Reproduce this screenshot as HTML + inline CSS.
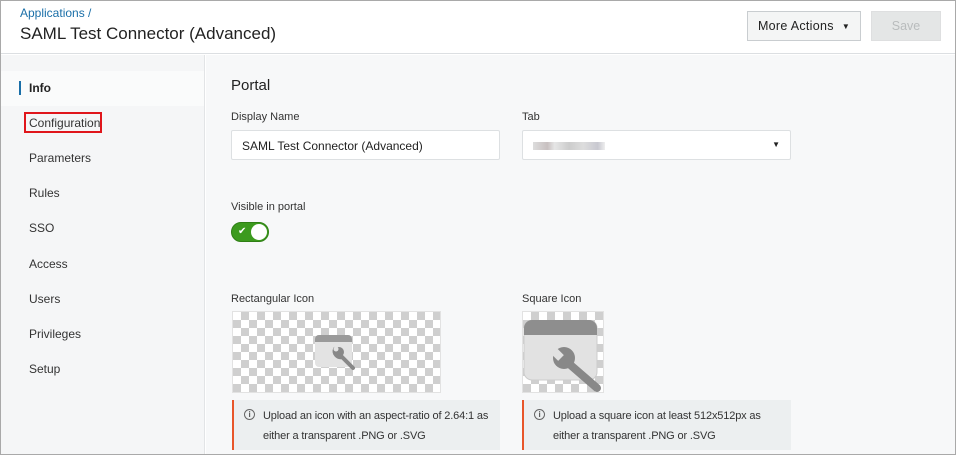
<!DOCTYPE html>
<html><head><meta charset="utf-8"><style>
*{box-sizing:border-box;margin:0;padding:0}
body{width:956px;height:455px;overflow:hidden;font-family:"Liberation Sans",Arial,sans-serif;background:#fff;position:relative}
.frame{position:absolute;inset:0;border:1px solid #a9a9a9;}
.hdr{position:absolute;left:0;top:0;width:956px;height:54px;background:#fff;border-bottom:1px solid #dcdfe2}
.crumb{position:absolute;left:20px;top:6px;font-size:12px;color:#1a6fa8}
.title{position:absolute;left:20px;top:24px;font-size:17px;color:#222}
.btn{position:absolute;top:11px;height:30px;font-size:12.5px;display:flex;align-items:center;justify-content:center}
.more{left:747px;width:114px;border:1px solid #c9cdd0;background:#f4f5f5;color:#222;letter-spacing:.3px}
.save{left:871px;width:70px;background:#e4e6e6;color:#b9bcbd;border:1px solid #dedfe0}
.side{position:absolute;left:0;top:55px;width:205px;height:400px;background:#f5f6f7;border-right:1px solid #e2e4e6}
.band{position:absolute;left:0;top:16px;width:204px;height:35px;background:#fafbfb}
.item{position:absolute;left:29px;font-size:12px;color:#333}
.main{position:absolute;left:206px;top:55px;width:749px;height:399px;background:#f7f8f9}
.lbl{position:absolute;font-size:11px;color:#333}
.inp{position:absolute;height:30px;background:#fff;border:1px solid #dde0e2;border-radius:2px;font-size:12px;color:#222;padding:8px 10px}
.chk{position:absolute;background-color:#fff;background-image:conic-gradient(#cfcfcf 25%,#fff 0 50%,#cfcfcf 0 75%,#fff 0);background-size:16px 16px;border:1px solid #e2e2e2}
.note{position:absolute;height:50px;background:#eceff0;border-left:2px solid #e8562a;font-size:11px;color:#333;line-height:20px;padding:6px 0 0 29px;letter-spacing:-.15px}
.note .i{position:absolute;left:10px;top:9px;width:11px;height:11px;border:1px solid #666;border-radius:50%;font-size:8px;line-height:9px;text-align:center;color:#555;font-weight:bold}
</style></head><body>
<div class="hdr">
<div class="crumb">Applications /</div>
<div class="title">SAML Test Connector (Advanced)</div>
<div class="btn more">More Actions <span style="font-size:8px;margin-left:8px">▼</span></div>
<div class="btn save">Save</div>
</div>
<div class="side">
<div class="band"></div>
<div style="position:absolute;left:19px;top:26px;width:2px;height:14px;background:#1a6fa8"></div>
<div class="item" style="top:26px;font-weight:bold;color:#222">Info</div>
<div style="position:absolute;left:24px;top:57px;width:78px;height:21px;border:2px solid #e0161b"></div>
<div class="item" style="top:61px">Configuration</div>
<div class="item" style="top:96px">Parameters</div>
<div class="item" style="top:131px">Rules</div>
<div class="item" style="top:166px">SSO</div>
<div class="item" style="top:202px">Access</div>
<div class="item" style="top:237px">Users</div>
<div class="item" style="top:272px">Privileges</div>
<div class="item" style="top:307px">Setup</div>
</div>
<div class="main">
<div style="position:absolute;left:25px;top:22px;font-size:15px;color:#222">Portal</div>
<div class="lbl" style="left:25px;top:56px">Display Name</div>
<div class="inp" style="left:25px;top:75px;width:269px">SAML Test Connector (Advanced)</div>
<div class="lbl" style="left:316px;top:56px">Tab</div>
<div class="inp" style="left:316px;top:75px;width:269px"><span style="display:inline-block;width:72px;height:8px;margin-top:3px;background:linear-gradient(90deg,#ddd,#c8c0c0 20%,#e6e6e6 30%,#ccc 50%,#ddd 70%,#c8c8d0 90%,#eee)"></span><span style="position:absolute;right:10px;top:9px;font-size:8px">▼</span></div>
<div class="lbl" style="left:25px;top:146px">Visible in portal</div>
<div style="position:absolute;left:25px;top:167px;width:38px;height:20px;background:#3c9a1e;border-radius:10px;border:1px solid #2f7f15">
<span style="position:absolute;left:6px;top:3px;color:#fff;font-size:10px">✔</span>
<div style="position:absolute;right:1px;top:1px;width:16px;height:16px;border-radius:50%;background:#fff"></div></div>
<div class="lbl" style="left:25px;top:238px">Rectangular Icon</div>
<div class="chk" style="left:26px;top:256px;width:209px;height:82px"></div>
<svg style="position:absolute;left:109px;top:280px" width="46" height="40" viewBox="0 0 46 40"><rect x="0" y="0" width="37" height="32" rx="4" fill="#e3e3e3"/><path d="M0 4a4 4 0 0 1 4-4h29a4 4 0 0 1 4 4v3H0z" fill="#9a9a9a"/><path d="M20 14a6 6 0 0 0 7 8l11 11" stroke="#888" stroke-width="4" fill="none" stroke-linecap="round"/><circle cx="24" cy="17" r="5" fill="#888"/><circle cx="21" cy="14" r="2.5" fill="#e3e3e3"/></svg>
<div class="lbl" style="left:316px;top:238px">Square Icon</div>
<div class="chk" style="left:316px;top:256px;width:82px;height:82px"></div>
<svg style="position:absolute;left:317px;top:265px" width="82" height="73" viewBox="0 0 82 73"><rect x="1" y="0" width="73" height="60" rx="8" fill="#e2e2e2" stroke="#ccc"/><path d="M1 8a8 8 0 0 1 8-8h57a8 8 0 0 1 8 8v7H1z" fill="#8e8e8e"/><path d="M44 42l30 26" stroke="#888" stroke-width="8" fill="none" stroke-linecap="round"/><circle cx="41" cy="38" r="11" fill="#888"/><path d="M30 30l8 8" stroke="#e2e2e2" stroke-width="8"/></svg>
<div class="note" style="left:26px;top:345px;width:268px"><span class="i">i</span>Upload an icon with an aspect-ratio of 2.64:1 as<br>either a transparent .PNG or .SVG</div>
<div class="note" style="left:316px;top:345px;width:269px"><span class="i">i</span>Upload a square icon at least 512x512px as<br>either a transparent .PNG or .SVG</div>
</div>
<div class="frame"></div>
</body></html>
